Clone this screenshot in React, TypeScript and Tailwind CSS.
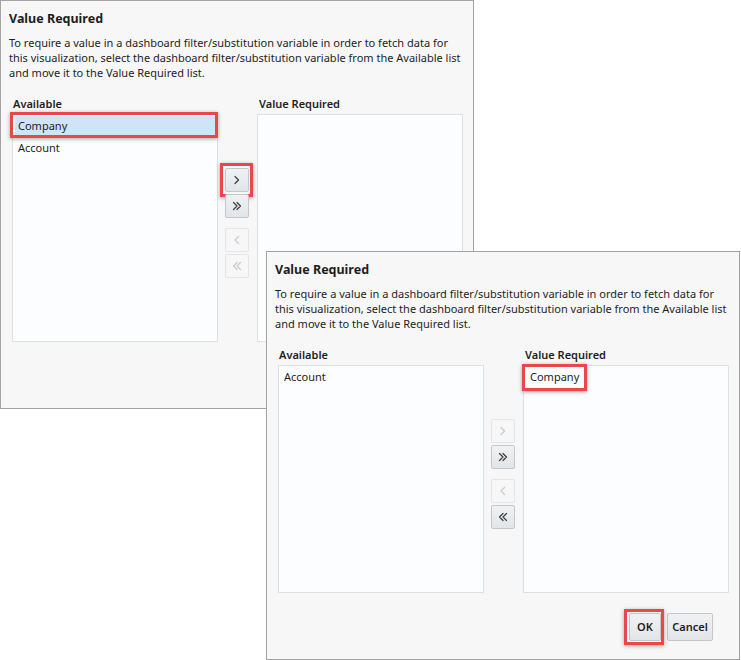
import type { ReactNode } from 'react';

type Glyph = 'right' | 'allRight' | 'left' | 'allLeft';

const font = { fontFamily: '"Noto Sans", "Open Sans", Arial, sans-serif' };

function GlyphIcon({ kind }: { kind: Glyph }) {
  const paths: Record<Glyph, string> = {
    right: 'M4 2.5 L7.5 6 L4 9.5',
    left: 'M7.5 2.5 L4 6 L7.5 9.5',
    allRight: 'M2.5 2.5 L6 6 L2.5 9.5 M6 2.5 L9.5 6 L6 9.5',
    allLeft: 'M6 2.5 L2.5 6 L6 9.5 M9.5 2.5 L6 6 L9.5 9.5',
  };
  return (
    <svg width="12" height="12" viewBox="0 0 12 12" fill="none">
      <path d={paths[kind]} stroke="currentColor" strokeWidth="1.2" strokeLinecap="round" strokeLinejoin="round" />
    </svg>
  );
}

// red callout drawn over the thing being pointed at
function Callout({ className }: { className: string }) {
  return <div className={`absolute pointer-events-none border-[3px] border-[#e8474e] shadow-[0_1px_4px_rgba(0,0,0,0.35)] ${className}`} />;
}

function ShuttleButton({ kind, enabled, marked }: { kind: Glyph; enabled: boolean; marked?: boolean }) {
  return (
    <div className="relative">
      <div
        className={`w-[24px] h-[24px] flex items-center justify-center rounded-[2px] border ${
          enabled
            ? 'border-[#c3c7cc] bg-gradient-to-b from-[#f0f1f3] to-[#e2e5e8] text-[#3c3c3c]'
            : 'border-[#e3e5e8] bg-[#f7f7f7] text-[#c9c9c9]'
        }`}
      >
        <GlyphIcon kind={kind} />
      </div>
      {marked && <Callout className="-left-[5px] -right-[4px] -top-[5px] -bottom-[5px]" />}
    </div>
  );
}

function ListBox({ children }: { children?: ReactNode }) {
  return (
    <div className="w-[206px] h-[228px] border border-[#dde0e4] bg-[#fcfdff]">{children}</div>
  );
}

function Row({ label, selected, marked }: { label: string; selected?: boolean; marked?: boolean }) {
  return (
    <div className="h-[22px] px-[2px] py-[1px]">
      <div className={`relative h-[20px] flex items-center px-[3px] ${selected ? 'bg-[#cfe4f7]' : ''}`}>
        {label}
        {marked && <Callout className="-left-[5px] -right-[3px] -top-[4px] -bottom-[2px]" />}
      </div>
    </div>
  );
}

interface DialogProps {
  pos: string;
  available: ReactNode;
  required: ReactNode;
  buttons: { kind: Glyph; enabled: boolean; marked?: boolean }[];
  markOk?: boolean;
}

function Dialog({ pos, available, required, buttons, markOk }: DialogProps) {
  return (
    <div className={`absolute ${pos} w-[474px] h-[409px] border border-[#a3a3a3] bg-[#f7f7f7] text-[#1e1e1e] flex flex-col`} style={font}>
      <div className="pl-[8px] pt-[8px] text-[12.5px] leading-[20px] font-bold">Value Required</div>
      <p className="pl-[8px] mt-[6px] text-[11px] leading-[15px] whitespace-nowrap">
        To require a value in a dashboard filter/substitution variable in order to fetch data for
        <br />
        this visualization, select the dashboard filter/substitution variable from the Available list
        <br />
        and move it to the Value Required list.
      </p>

      <div className="flex pl-[11px] mt-[16px] text-[11px]">
        <div className="flex flex-col">
          <div className="pl-[1px] h-[16px] leading-[16px] font-semibold">Available</div>
          <div className="mt-[2px]">
            <ListBox>{available}</ListBox>
          </div>
        </div>

        <div className="ml-[7px] mr-[8px] pt-[72px] flex flex-col">
          <div className="flex flex-col gap-[2px]">
            <ShuttleButton {...buttons[0]} />
            <ShuttleButton {...buttons[1]} />
          </div>
          <div className="mt-[10px] flex flex-col gap-[2px]">
            <ShuttleButton {...buttons[2]} />
            <ShuttleButton {...buttons[3]} />
          </div>
        </div>

        <div className="flex flex-col">
          <div className="pl-[2px] h-[16px] leading-[16px] font-semibold">Value Required</div>
          <div className="mt-[2px]">
            <ListBox>{required}</ListBox>
          </div>
        </div>
      </div>

      <div className="flex justify-end gap-[6px] pr-[26px] mt-[20px] text-[11px] font-semibold">
        <div className="relative">
          <div className="w-[32px] h-[28px] flex items-center justify-center rounded-[2px] border border-[#c3c7cc] bg-gradient-to-b from-[#f0f1f3] to-[#e2e5e8]">
            OK
          </div>
          {markOk && <Callout className="-left-[5px] -right-[3px] -top-[4px] -bottom-[4px]" />}
        </div>
        <div className="w-[46px] h-[28px] flex items-center justify-center rounded-[2px] border border-[#c3c7cc] bg-gradient-to-b from-[#f0f1f3] to-[#e2e5e8]">
          Cancel
        </div>
      </div>
    </div>
  );
}

export default function App() {
  return (
    <div className="relative w-[741px] h-[660px] bg-white overflow-hidden">
      <Dialog
        pos="left-0 top-0"
        available={
          <>
            <Row label="Company" selected marked />
            <Row label="Account" />
          </>
        }
        required={null}
        buttons={[
          { kind: 'right', enabled: true, marked: true },
          { kind: 'allRight', enabled: true },
          { kind: 'left', enabled: false },
          { kind: 'allLeft', enabled: false },
        ]}
      />
      <Dialog
        pos="left-[266px] top-[251px]"
        available={<Row label="Account" />}
        required={
          <div className="h-[22px] pl-[2px] py-[1px] flex">
            <div className="relative h-[20px] flex items-center px-[4px]">
              Company
              <Callout className="-left-[4px] -right-[4px] -top-[3px] -bottom-[4px]" />
            </div>
          </div>
        }
        buttons={[
          { kind: 'right', enabled: false },
          { kind: 'allRight', enabled: true },
          { kind: 'left', enabled: false },
          { kind: 'allLeft', enabled: true },
        ]}
        markOk
      />
    </div>
  );
}
